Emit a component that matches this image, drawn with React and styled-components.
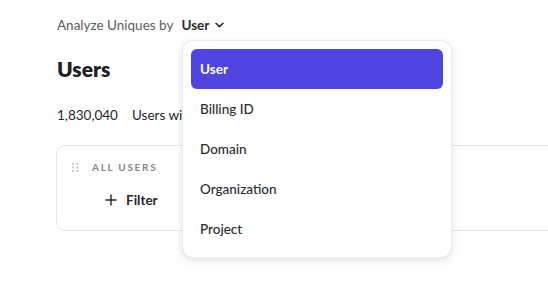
import React from "react";
import styled, { createGlobalStyle } from "styled-components";

const Global = createGlobalStyle`
  html, body { margin: 0; padding: 0; background: #ffffff; }
  body { font-family: Lato, "Noto Sans", sans-serif; color: #1f1f24; -webkit-font-smoothing: antialiased; }
  * { box-sizing: border-box; }
`;

const Page = styled.div`
  position: relative;
  width: 548px;
  height: 283px;
  overflow: hidden;
  padding: 16px 0 0 57px;
`;

const Toolbar = styled.div`
  display: flex;
  align-items: center;
  gap: 8px;
  height: 17px;
  font-size: 13.5px;
  color: #5b5b63;
`;

const Picker = styled.button`
  display: flex;
  align-items: center;
  gap: 6px;
  border: 0;
  background: none;
  padding: 0;
  font: inherit;
  font-weight: 700;
  color: #2a2a30;
`;

const Title = styled.h1`
  margin: 23px 0 0;
  font-size: 21px;
  line-height: 26px;
  font-weight: 800;
  color: #1f1f24;
`;

const Stats = styled.div`
  margin-top: 25px;
  display: flex;
  gap: 14px;
  font-size: 13.5px;
  line-height: 16px;
  color: #26262b;
`;

const Card = styled.div`
  margin-top: 22px;
  margin-left: -1px;
  width: 620px;
  height: 86px;
  border: 1px solid #e6e6ea;
  border-radius: 9px;
  padding: 15px 0 0 15px;
`;

const CardHead = styled.div`
  display: flex;
  align-items: center;
  gap: 13px;
  font-size: 10px;
  font-weight: 700;
  letter-spacing: 1.7px;
  color: #85858d;
  text-transform: uppercase;
`;

const AddFilter = styled.button`
  margin: 19px 0 0 33px;
  display: flex;
  align-items: center;
  gap: 9px;
  border: 0;
  background: none;
  padding: 0;
  font: inherit;
  font-size: 13.5px;
  font-weight: 700;
  color: #26262b;
`;

const Menu = styled.ul`
  position: absolute;
  left: 182px;
  top: 40px;
  width: 270px;
  margin: 0;
  padding: 8px;
  list-style: none;
  background: #fff;
  border: 1px solid #ececef;
  border-radius: 11px;
  box-shadow: 0 3px 8px rgba(0, 0, 0, 0.1), 0 0 2px rgba(0, 0, 0, 0.05);
`;

const Item = styled.li`
  height: 40px;
  display: flex;
  align-items: center;
  padding-left: 9px;
  border-radius: 6px;
  font-size: 13.5px;
  font-weight: ${(p) => (p.$active ? 700 : 500)};
  background: ${(p) => (p.$active ? "#4e44df" : "transparent")};
  color: ${(p) => (p.$active ? "#ffffff" : "#2a2a30")};
`;

const Chevron = () => (
  <svg width="9" height="6" viewBox="0 0 9 6" fill="none">
    <path d="M1 1.2L4.5 4.6L8 1.2" stroke="#26262b" strokeWidth="1.5" strokeLinecap="round" strokeLinejoin="round" />
  </svg>
);

const Grip = () => (
  <svg width="7" height="9" viewBox="0 0 7 9">
    {[0, 1, 2].map((r) =>
      [0, 1].map((c) => <circle key={`${r}${c}`} cx={1 + c * 4.5} cy={1 + r * 3.5} r="0.9" fill="#b3b3ba" />)
    )}
  </svg>
);

const Plus = () => (
  <svg width="12" height="12" viewBox="0 0 12 12">
    <path d="M6 0.5V11.5M0.5 6H11.5" stroke="#26262b" strokeWidth="1.4" />
  </svg>
);

const options = ["User", "Billing ID", "Domain", "Organization", "Project"];

export default function App() {
  return (
    <>
      <Global />
      <Page>
        <Toolbar>
          <span>Analyze Uniques by</span>
          <Picker>
            User <Chevron />
          </Picker>
        </Toolbar>
        <Title>Users</Title>
        <Stats>
          <span>1,830,040</span>
          <span>Users with profiles</span>
        </Stats>
        <Card>
          <CardHead>
            <Grip />
            <span>All Users</span>
          </CardHead>
          <AddFilter>
            <Plus />
            Filter
          </AddFilter>
        </Card>
        <Menu>
          {options.map((o, i) => (
            <Item key={o} $active={i === 0}>
              {o}
            </Item>
          ))}
        </Menu>
      </Page>
    </>
  );
}
